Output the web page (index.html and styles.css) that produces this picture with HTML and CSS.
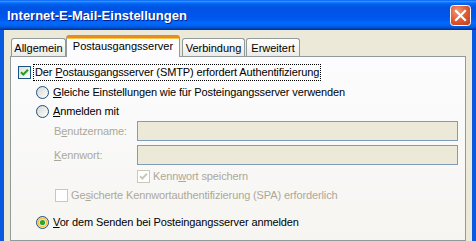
FILE: index.html
```html
<!DOCTYPE html>
<html>
<head>
<meta charset="utf-8">
<link rel="stylesheet" href="styles.css">
</head>
<body>
<div class="window">
  <div class="titlebar">
    <span class="title">Internet-E-Mail-Einstellungen</span>
    <span class="close">
      <svg width="21" height="21" viewBox="0 0 21 21">
        <defs>
          <radialGradient id="cg" cx="0.35" cy="0.3" r="0.9">
            <stop offset="0" stop-color="#F39A7A"/>
            <stop offset="0.5" stop-color="#E05A33"/>
            <stop offset="1" stop-color="#C0401C"/>
          </radialGradient>
        </defs>
        <rect x="0.5" y="0.5" width="20" height="20" rx="3" fill="url(#cg)" stroke="#FFFFFF"/>
        <path d="M6 6 L15 15 M15 6 L6 15" stroke="#FFFFFF" stroke-width="2.2" stroke-linecap="square"/>
      </svg>
    </span>
  </div>
  <div class="frame">
    <div class="tabs">
      <div class="tab tab-allg">Allgemein</div>
      <div class="tab tab-sel">Postausgangsserver</div>
      <div class="tab tab-verb">Verbindung</div>
      <div class="tab tab-erw">Erweitert</div>
    </div>
    <div class="panel">
      <div class="row row-auth">
        <svg class="box" width="13" height="13" viewBox="0 0 13 13">
          <defs>
            <linearGradient id="bg1" x1="0" y1="0" x2="1" y2="1">
              <stop offset="0" stop-color="#DCDCD7"/>
              <stop offset="1" stop-color="#FFFFFF"/>
            </linearGradient>
          </defs>
          <rect x="0.5" y="0.5" width="12" height="12" fill="url(#bg1)" stroke="#1C5180"/>
          <path d="M3 6.2 L5.3 8.5 L10 3.8" fill="none" stroke="#21A121" stroke-width="2"/>
        </svg>
        <span class="focus">Der <u>P</u>ostausgangsserver (SMTP) erfordert Authentifizierung</span>
      </div>
      <div class="row row-radio1">
        <svg class="radio" width="13" height="13" viewBox="0 0 13 13">
          <defs>
            <linearGradient id="rg" x1="0" y1="0" x2="1" y2="1">
              <stop offset="0" stop-color="#D6D6CE"/>
              <stop offset="1" stop-color="#FFFFFF"/>
            </linearGradient>
          </defs>
          <circle cx="6.5" cy="6.5" r="6" fill="url(#rg)" stroke="#1C5180"/>
        </svg>
        <span class="lbl"><u>G</u>leiche Einstellungen wie für Posteingangsserver verwenden</span>
      </div>
      <div class="row row-radio2">
        <svg class="radio" width="13" height="13" viewBox="0 0 13 13">
          <circle cx="6.5" cy="6.5" r="6" fill="url(#rg)" stroke="#1C5180"/>
        </svg>
        <span class="lbl"><u>A</u>nmelden mit</span>
      </div>
      <div class="row row-field row-user">
        <span class="flabel">B<u>e</u>nutzername:</span>
        <span class="input"></span>
      </div>
      <div class="row row-field row-pass">
        <span class="flabel"><u>K</u>ennwort:</span>
        <span class="input"></span>
      </div>
      <div class="row row-save">
        <svg class="box" width="13" height="13" viewBox="0 0 13 13">
          <rect x="0.5" y="0.5" width="12" height="12" fill="#FFFFFF" stroke="#CAC8BB"/>
          <path d="M3 6.2 L5.3 8.5 L10 3.8" fill="none" stroke="#CAC8BB" stroke-width="2"/>
        </svg>
        <span class="lbl dis">Kenn<u>w</u>ort speichern</span>
      </div>
      <div class="row row-spa">
        <svg class="box" width="13" height="13" viewBox="0 0 13 13">
          <rect x="0.5" y="0.5" width="12" height="12" fill="#FFFFFF" stroke="#CAC8BB"/>
        </svg>
        <span class="lbl dis">Ge<u>s</u>icherte Kennwortauthentifizierung (SPA) erforderlich</span>
      </div>
      <div class="row row-radio3">
        <svg class="radio" width="13" height="13" viewBox="0 0 13 13">
          <circle cx="6.5" cy="6.5" r="6" fill="url(#rg)" stroke="#1C5180"/>
          <circle cx="6.5" cy="6.5" r="4.3" fill="none" stroke="#F8C04A" stroke-width="1.6"/>
          <circle cx="6.5" cy="6.5" r="2.6" fill="#2CA52C"/>
        </svg>
        <span class="lbl"><u>V</u>or dem Senden bei Posteingangsserver anmelden</span>
      </div>
    </div>
  </div>
</div>
</body>
</html>
```
FILE: styles.css
```css
html, body {
  margin: 0;
  padding: 0;
  background: #ECE9D8;
}
.window {
  width: 476px;
  height: 241px;
  overflow: hidden;
  display: flex;
  flex-direction: column;
  font-family: "Liberation Sans", Arial, sans-serif;
  font-size: 11px;
  color: #000;
}
.titlebar {
  height: 30px;
  flex: none;
  display: flex;
  align-items: center;
  justify-content: space-between;
  padding: 0 5px 0 7px;
  background: linear-gradient(to bottom, #0058EE 0%, #3593FF 4%, #288EFF 6%, #127DFF 8%, #036FFC 10%, #0262EE 14%, #0057E5 20%, #0054E3 24%, #0055EB 56%, #005BF5 66%, #026AFE 76%, #0062EF 86%, #0052D6 92%, #0040AB 96%, #003092 100%);
}
.title {
  color: #FFFFFF;
  font-weight: bold;
  font-size: 13px;
  text-shadow: 1px 1px 0 #0A1E8A;
  padding-top: 1px;
}
.close {
  display: flex;
  height: 21px;
  margin-top: 1px;
}
.frame {
  flex: 1;
  display: flex;
  flex-direction: column;
  background: #ECE9D8;
  border-left: 4px solid #0A5ADF;
  border-right: 4px solid #0A5ADF;
  padding: 5px 6px 0 6px;
}
.tabs {
  display: flex;
  align-items: flex-end;
  height: 21px;
  padding-left: 1px;
  position: relative;
  z-index: 1;
}
.tab {
  box-sizing: border-box;
  height: 18px;
  border: 1px solid #919B9C;
  border-bottom: none;
  border-radius: 3px 3px 0 0;
  background: linear-gradient(to bottom, #FFFFFF, #ECEBE6);
  display: flex;
  align-items: center;
  justify-content: center;
  padding-top: 1px;
}
.tab-allg { width: 55px; }
.tab-sel {
  width: 114px;
  height: 22px;
  margin-bottom: -1px;
  background: #FCFCFE;
  border-top: 3px solid #E68B2C;
  box-shadow: inset 0 1px 0 #FFC83C;
  padding-top: 0;
  padding-bottom: 3px;
}
.tab-verb { width: 63px; margin-left: 2px; }
.tab-erw { width: 54px; margin-left: 1px; }
.panel {
  flex: 1;
  border: 1px solid #919B9C;
  background: linear-gradient(to bottom, #FCFCFE, #F6F5F1);
  display: flex;
  flex-direction: column;
  padding-left: 7px;
  letter-spacing: -0.12px;
}
.row {
  display: flex;
  align-items: center;
  height: 16px;
  flex: none;
}
.box, .radio { flex: none; }
.row-auth {
  margin-top: 7px;
  height: 17px;
}
.focus {
  margin-left: 2px;
  border: 1px dotted #000;
  padding: 0 1px 0 1px;
  height: 15px;
  line-height: 15px;
}
.row-radio1 { margin-top: 3px; margin-left: 18px; }
.row-radio2 { margin-top: 3px; margin-left: 18px; }
.row-radio1 .lbl, .row-radio2 .lbl, .row-radio3 .lbl { margin-left: 4px; }
.row-field {
  height: 20px;
  margin-left: 36px;
}
.row-user { margin-top: 2px; }
.row-pass { margin-top: 4px; }
.flabel {
  width: 83px;
  color: #ACA899;
}
.input {
  box-sizing: border-box;
  width: 321px;
  height: 20px;
  border: 1px solid #7F9DB9;
  background: #ECE9D8;
}
.row-save { margin-top: 3px; margin-left: 119px; }
.row-spa { margin-top: 3px; margin-left: 37px; }
.row-save .lbl, .row-spa .lbl { margin-left: 3px; }
.dis { color: #ACA899; }
.row-radio3 { margin-top: 11px; margin-left: 18px; }
```
